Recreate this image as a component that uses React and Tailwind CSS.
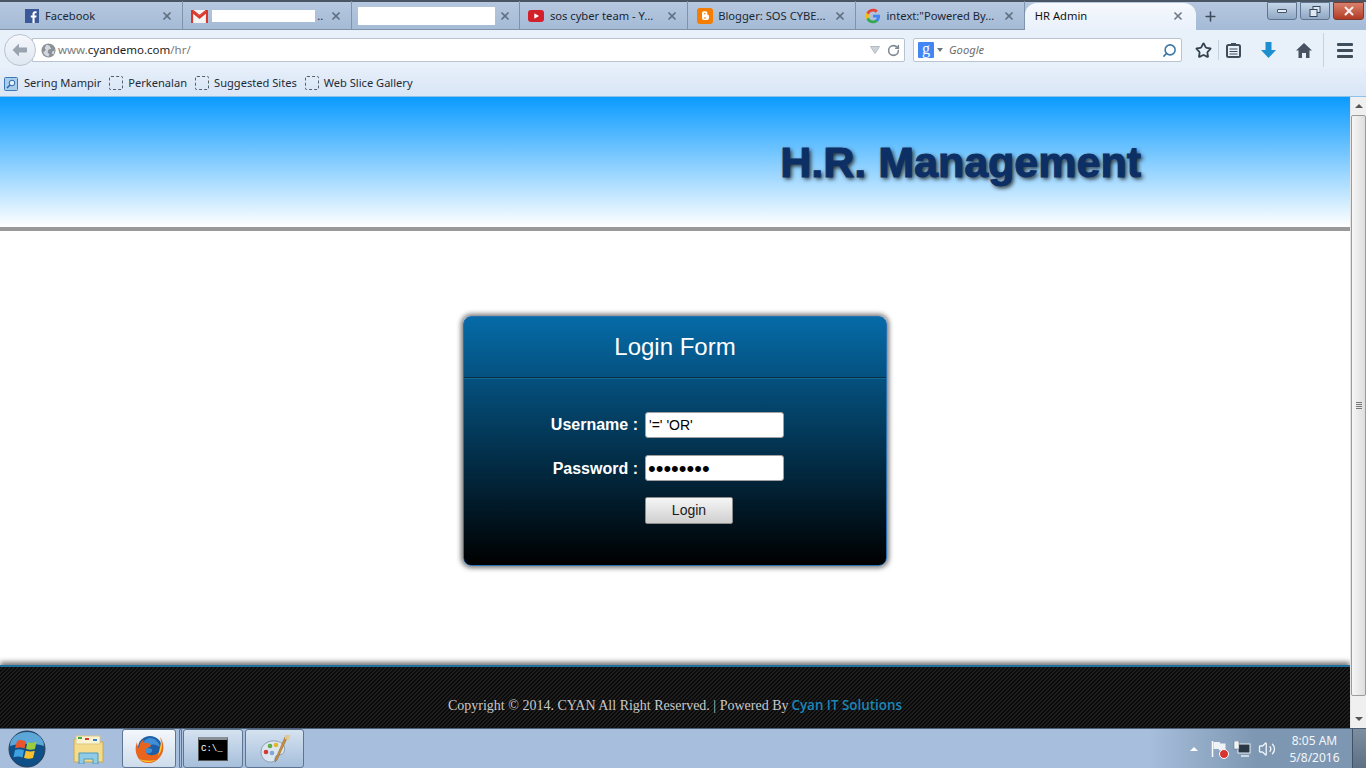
import { Star, Search, RotateCw, Plus, X, Volume2 } from 'lucide-react';

const tabs = [
  { title: 'Facebook', icon: 'fb' },
  { title: null, icon: 'gmail', blob: 'w-[103px] h-[12px] ml-[4px]', tail: '..' },
  { title: null, icon: null, blob: 'w-[137px] h-[18px] -ml-[2px]' },
  { title: 'sos cyber team - Y...', icon: 'yt' },
  { title: 'Blogger: SOS CYBE...', icon: 'blogger' },
  { title: 'intext:"Powered By...', icon: 'google' },
];

const bookmarks = ['Perkenalan', 'Suggested Sites', 'Web Slice Gallery'];

const TabIcon = ({ type }) => {
  if (type === 'fb') {
    return (
      <svg width="14" height="14" viewBox="0 0 14 14">
        <rect width="14" height="14" fill="#3b5998" />
        <path d="M9.6 14V8.6h1.7l.3-2.1h-2V5.2c0-.6.2-1 1-1h1V2.3c-.2 0-.8-.1-1.500-.1-1.500 0-2.600.9-2.600 2.700v1.600H5.800v2.100h1.700V14z" fill="#fff" />
      </svg>
    );
  }
  if (type === 'gmail') {
    return (
      <svg width="17" height="13" viewBox="0 0 17 13">
        <rect width="17" height="13" fill="#f4f4f4" />
        <path d="M1 13V1.500L8.500 7.500 16 1.500V13" fill="none" stroke="#d9372c" strokeWidth="2.200" />
        <path d="M0 .5h2l6.500 5 6.500-5h2" fill="none" stroke="#d9372c" strokeWidth="1.200" />
      </svg>
    );
  }
  if (type === 'yt') {
    return (
      <svg width="16" height="12" viewBox="0 0 16 12">
        <rect width="16" height="12" rx="3" fill="#d3202a" />
        <path d="M6.300 3.200v5.600L11 6z" fill="#fff" />
      </svg>
    );
  }
  if (type === 'blogger') {
    return (
      <svg width="16" height="16" viewBox="0 0 16 16">
        <rect width="16" height="16" rx="3" fill="#f57d00" />
        <path d="M5 8.500V5.200C5 4 5.800 3.300 7 3.300h1.500c1.100 0 1.900.8 1.900 1.800v1.100c0 .5.300.7.700.7.500 0 .9.300.9.900v2.200c0 1.200-.9 2-2 2H7c-1.200 0-2-.8-2-2z" fill="#fff" />
        <path d="M6.900 5.700h1.700M6.900 10h2.200" stroke="#f57d00" strokeWidth="1" />
      </svg>
    );
  }
  if (type === 'google') {
    return (
      <svg width="16" height="16" viewBox="0 0 24 24">
        <path d="M22.600 12.200c0-.8-.1-1.500-.2-2.200H12v4.200h5.900c-.3 1.400-1 2.500-2.200 3.300v2.700h3.600c2.100-1.900 3.300-4.700 3.300-8z" fill="#4285f4" />
        <path d="M12 23c3 0 5.500-1 7.300-2.700l-3.600-2.800c-1 .7-2.200 1.100-3.700 1.100-2.800 0-5.300-1.900-6.100-4.500H2.200v2.800C4 20.500 7.700 23 12 23z" fill="#34a853" />
        <path d="M5.900 14.100c-.5-1.400-.5-2.900 0-4.300V7H2.200c-1.500 3-1.500 6.900 0 9.900z" fill="#fbbc05" />
        <path d="M12 5.400c1.600 0 3 .6 4.100 1.600l3.200-3.200C17.500 2 15 1 12 1 7.700 1 4 3.500 2.200 7l3.700 2.800C6.700 7.300 9.200 5.400 12 5.400z" fill="#ea4335" />
      </svg>
    );
  }
  return null;
};

const Tab = ({ tab }) => (
  <div className="w-[168.300px] h-[28px] flex items-center pt-[2px] pl-[8px] pr-[9px] border-r border-[#7f93ab] shrink-0">
    {tab.icon && (
      <div className="w-[17px] flex justify-center shrink-0">
        <TabIcon type={tab.icon} />
      </div>
    )}
    {tab.title && <span className="ml-[5px] flex-1 whitespace-nowrap text-[#1d2733]">{tab.title}</span>}
    {tab.blob && (
      <div className="flex-1 flex items-center">
        <div className={`${tab.blob} bg-white shrink-0`} />
        {tab.tail && <span className="text-[#1d2733] ml-[2px]">{tab.tail}</span>}
      </div>
    )}
    <X size={12} strokeWidth={3.500} className="text-[#5f6f80] shrink-0 ml-[4px]" />
  </div>
);

const WindowButtons = () => (
  <div className="flex self-start h-[18px] ml-auto mr-[2px] gap-[3px]">
    <div className="w-[30px] rounded-b-[3px] border border-[#5f7590] bg-gradient-to-b from-[#c6d6e8] to-[#8fa8c4] flex items-center justify-center">
      <div className="w-[10px] h-[4px] bg-[#e6edf5] border border-[#44556a] rounded-[1px]" />
    </div>
    <div className="w-[30px] rounded-b-[3px] border border-[#5f7590] bg-gradient-to-b from-[#c6d6e8] to-[#8fa8c4] flex items-center justify-center">
      <svg width="12" height="11" viewBox="0 0 12 11">
        <rect x="4" y=".5" width="7" height="6" fill="#dfe8f2" stroke="#34465c" />
        <rect x="1" y="3.500" width="7" height="7" fill="#dfe8f2" stroke="#34465c" />
      </svg>
    </div>
    <div className="w-[31px] rounded-b-[3px] border border-[#7a3b30] bg-gradient-to-b from-[#d9806c] to-[#b23a22] flex items-center justify-center">
      <X size={14} strokeWidth={3.500} className="text-[#f5eeee]" />
    </div>
  </div>
);

const TabBar = () => (
  <div className="h-[30px] shrink-0 flex items-end border-t-2 border-[#4a5563] bg-gradient-to-b from-[#b5c8df] to-[#a4bad5] text-[11.200px] font-['Noto_Sans',sans-serif]">
    <div className="w-[15px] h-[28px] border-b border-[#7f93ab] shrink-0" />
    <div className="flex border-b border-[#7f93ab]">
      {tabs.map((tab, i) => (
        <Tab key={i} tab={tab} />
      ))}
    </div>
    <div className="w-[171px] h-[28px] -mb-px flex items-center pl-[10px] pr-[12px] pb-[2px] rounded-t-[12px] bg-gradient-to-b from-[#f6f9fd] to-[#e8f0fa] shrink-0 text-[#111]">
      <span className="flex-1">HR Admin</span>
      <X size={12} strokeWidth={3.500} className="text-[#6f7d8c]" />
    </div>
    <div className="h-[28px] flex items-center pl-[7px] shrink-0">
      <Plus size={15} strokeWidth={2.500} className="text-[#3f4d5e]" />
    </div>
    <WindowButtons />
  </div>
);

const NavBar = () => (
  <div className="h-[38px] shrink-0 flex items-center bg-[#e8f0fa] pt-[2px] pl-[4px] text-[11.200px] font-['Noto_Sans',sans-serif]">
    <div className="w-[32px] h-[32px] rounded-full border border-[#b9c4d1] bg-gradient-to-b from-[#f5f8fc] to-[#dfe7f1] flex items-center justify-center shrink-0 z-10">
      <svg width="18" height="16" viewBox="0 0 18 16">
        <path d="M8 1.500 1.500 8 8 14.500V10.500h8v-5H8z" fill="#99a4b0" />
      </svg>
    </div>
    <div className="-ml-[4px] w-[873px] h-[24px] bg-white border border-[#b8c4d2] rounded-r-[2px] flex items-center pl-[6px] pr-[4px] shrink-0">
      <svg width="15" height="15" viewBox="0 0 16 16" className="shrink-0 ml-[2px]">
        <circle cx="8" cy="8" r="7.500" fill="#8a9199" />
        <path d="M6 1.500 9 3l2 3-3 1-1 3 2 2-1 2.500C5 14 3 12 2.500 9.500L5 8 4 5zM12 9l2.500-1-1 4-2-.5z" fill="#d5d9de" />
      </svg>
      <span className="ml-[2px] flex-1 text-[11.500px] text-[#7a7a7a]">
        www.<span className="text-[#1d1d1d]">cyandemo.com</span>/hr/
      </span>
      <svg width="10" height="8" viewBox="0 0 10 8" className="mr-[7px]">
        <path d="M.5.500h9L5 7.500z" fill="#cdd3d9" stroke="#b3bac2" />
      </svg>
      <RotateCw size={13} strokeWidth={2.800} className="text-[#7e8891]" />
    </div>
    <div className="ml-[8px] w-[269px] h-[24px] bg-white border border-[#b8c4d2] rounded-[2px] flex items-center pl-[4px] pr-[4px] shrink-0">
      <div className="w-[16px] h-[16px] bg-[#4285f4] rounded-[1px] flex items-center justify-center pb-[3px] text-white text-[16px] leading-none font-['Liberation_Serif',serif]">
        g
      </div>
      <svg width="6" height="4" viewBox="0 0 6 4" className="ml-[3px]">
        <path d="M0 0h6L3 4z" fill="#6c7682" />
      </svg>
      <span className="ml-[6px] flex-1 italic text-[#6f6f6f]">Google</span>
      <Search size={15} strokeWidth={2.500} className="text-[#3b78a8] -scale-x-100" />
    </div>
    <div className="flex items-center pl-[13px]">
      <Star size={17} strokeWidth={2.500} className="text-[#33404e]" />
      <div className="w-px h-[20px] bg-[#c6d2e0] ml-[6px]" />
      <svg width="15" height="16" viewBox="0 0 15 16" className="ml-[7px]">
        <rect x="1" y="3" width="13" height="12" rx="1.500" fill="none" stroke="#3f4c5a" strokeWidth="2" />
        <rect x="5" y="1" width="5" height="3" fill="#3f4c5a" />
        <path d="M3.500 7h8M3.500 9.500h8M3.500 12h8" stroke="#3f4c5a" />
      </svg>
      <svg width="15" height="16" viewBox="0 0 15 16" className="ml-[20px]">
        <path d="M4.500 0h6v8h4.500l-7.500 8L0 8h4.500z" fill="#1c8fcf" />
      </svg>
      <svg width="16" height="15" viewBox="0 0 16 15" className="ml-[20px]">
        <path d="M8 0 0 7.500h2.500V15h3.500v-5h4v5h3.500V7.500H16z" fill="#46525f" />
      </svg>
      <div className="w-px h-[34px] bg-[#c6d2e0] ml-[11px]" />
      <div className="flex flex-col gap-[3px] ml-[13px]">
        <div className="w-[16px] h-[3px] bg-[#3f4c5a] rounded-[1px]" />
        <div className="w-[16px] h-[3px] bg-[#3f4c5a] rounded-[1px]" />
        <div className="w-[16px] h-[3px] bg-[#3f4c5a] rounded-[1px]" />
      </div>
    </div>
  </div>
);

const BookmarkBar = () => (
  <div className="h-[29px] shrink-0 flex items-center pt-[3px] pl-[4px] bg-gradient-to-b from-[#e6eefa] to-[#d9e6f6] border-b border-[#8fc0ea] text-[11.100px] text-[#1e2a36] font-['Noto_Sans',sans-serif]">
    <svg width="14" height="14" viewBox="0 0 14 14">
      <rect x=".5" y=".5" width="13" height="13" rx="1" fill="#a9cdec" stroke="#3f79b5" />
      <circle cx="8" cy="6" r="2.800" fill="#e4f1fb" stroke="#2d6aa8" />
      <path d="M6 8 3 11" stroke="#2d6aa8" strokeWidth="1.600" />
    </svg>
    <span className="ml-[6px]">Sering Mampir</span>
    {bookmarks.map((name) => (
      <div key={name} className="flex items-center ml-[8px]">
        <div className="w-[14px] h-[14px] border border-dashed border-[#56606c] rounded-[2px]" />
        <span className="ml-[5px]">{name}</span>
      </div>
    ))}
  </div>
);

const LoginCard = () => (
  <form className="w-[424px] h-[250px] mx-auto rounded-[8px] border border-[#2a6fb0] bg-[linear-gradient(to_bottom,#066ba8,#000)] shadow-[0_0_5px_2px_#777] font-['Liberation_Sans',sans-serif]">
    <div className="h-[61px] flex items-center justify-center border-b border-[#0c2d44] shadow-[0_1px_0_#0f6a90] text-[24px] text-white">
      Login Form
    </div>
    <div className="pt-[34px] flex flex-col">
      <div className="flex items-center h-[26px]">
        <label className="w-[174px] text-right text-[16px] font-bold text-white">Username :</label>
        <input
          readOnly
          type="text"
          value="'=' 'OR'"
          className="ml-[7px] w-[139px] h-[26px] px-[3px] bg-white rounded-[3px] border border-[#a0a0a0] text-[14px] text-black"
        />
      </div>
      <div className="flex items-center h-[26px] mt-[17px]">
        <label className="w-[174px] pt-px text-right text-[16px] font-bold text-white">Password :</label>
        <input
          readOnly
          type="password"
          value="12345678"
          className="ml-[7px] w-[139px] h-[26px] px-[2px] bg-white rounded-[3px] border border-[#a0a0a0] text-[22px] text-black"
        />
      </div>
      <button
        type="button"
        className="ml-[181px] mt-[16px] w-[88px] h-[27px] rounded-[2px] border border-[#8c8c8c] bg-gradient-to-b from-[#f6f6f6] to-[#cfcfcf] text-[14px] text-[#1a1a1a]"
      >
        Login
      </button>
    </div>
  </form>
);

const Footer = () => (
  <div className="h-[63px] shrink-0 flex items-center justify-center pt-[15px] border-t-2 border-[#1f6f9f] bg-[repeating-linear-gradient(135deg,#0a0a0a_0px,#0a0a0a_1.414px,#1e1e1e_1.414px,#1e1e1e_2.828px)] shadow-[0_-3px_5px_#777] text-[14px] text-[#c9c9c9] font-['Liberation_Serif',serif]">
    <span>Copyright © 2014. CYAN All Right Reserved. | Powered By </span>
    <span className="ml-[3px] text-[#1b86b8] font-semibold font-['Open_Sans',sans-serif] text-[13.400px]">Cyan IT Solutions</span>
  </div>
);

const Scrollbar = () => (
  <div className="w-[16px] shrink-0 flex flex-col items-center bg-[#f0f0f0] border-l border-[#e4e4e4]">
    <div className="h-[18px] flex items-center justify-center">
      <div className="border-x-[4px] border-x-transparent border-b-[4px] border-b-[#555]" />
    </div>
    <div className="w-[15px] h-[581px] rounded-[2px] border border-[#9b9b9b] bg-gradient-to-r from-[#f6f6f6] to-[#dedede] flex flex-col items-center justify-center gap-px">
      <div className="w-[6px] h-px bg-[#777]" />
      <div className="w-[6px] h-px bg-[#777]" />
      <div className="w-[6px] h-px bg-[#777]" />
      <div className="w-[6px] h-px bg-[#777]" />
    </div>
    <div className="flex-1" />
    <div className="h-[18px] flex items-center justify-center">
      <div className="border-x-[4px] border-x-transparent border-t-[4px] border-t-[#555]" />
    </div>
  </div>
);

const TaskButton = ({ children, className }) => (
  <div className={`${className} h-[39px] rounded-[3px] border border-[#5d7590] flex items-center justify-center shrink-0`}>
    {children}
  </div>
);

const Taskbar = () => (
  <div className="h-[40px] shrink-0 flex items-end border-t border-[#4c5f74] bg-[linear-gradient(to_right,#a7bfdc_0%,#a7bfdc_84%,#7d96b1_92%,#7d96b1_100%)] font-['Noto_Sans',sans-serif]">
    <div className="w-[122px] h-[39px] flex items-center shrink-0">
      <svg width="38" height="38" viewBox="0 0 38 38" className="ml-[8px] shrink-0">
        <circle cx="19" cy="19" r="18" fill="#0f4f87" stroke="#2a3e52" />
        <path d="M2 16a17 14 0 0 1 34 0c-8-3-25-3-34 0z" fill="#5ca6d8" />
        <path d="M9 11c3-1.500 6-1 9 .5l-1.500 7c-3-1.200-6-1.500-9.500-.2z" fill="#e8552c" />
        <path d="M19.500 12c3 1.500 6 1 9-.5l-1.500 7.500c-3 1-6 1-9-.2z" fill="#9ccb3b" />
        <path d="M7 20c3-1 6-.8 9 .3L14.500 27.500c-3-1.200-6-1.300-9-.2z" fill="#3ea2e0" />
        <path d="M17.800 20.800c3 1 6 1 9 0L25 28c-3 1-6 1-9-.2z" fill="#f6c12c" />
      </svg>
      <svg width="32" height="30" viewBox="0 0 32 30" className="ml-[27px] shrink-0">
        <path d="M1 5h11l3 3h15v20H1z" fill="#f4dc8c" stroke="#c8a858" />
        <rect x="3" y="2" width="24" height="8" fill="#fbf4d2" stroke="#d9c88a" />
        <rect x="5" y="3" width="4" height="2" fill="#3fae3f" />
        <rect x="12" y="4" width="4" height="2" fill="#d0392c" />
        <rect x="20" y="5" width="4" height="2" fill="#3a7cc8" />
        <path d="M6 19h19v11h-5v-5h-9v5H6z" fill="#8ecbe6" stroke="#4d9ac0" />
      </svg>
    </div>
    <TaskButton className="w-[54px] bg-gradient-to-b from-[#f4f7fb] to-[#cddcec]">
      <svg width="32" height="32" viewBox="0 0 32 32">
        <circle cx="17" cy="15" r="12" fill="#1f5fa8" />
        <path d="M17 5c5 0 9 4 10 9-3-2-6-3-9-2-3 0-4 2-3 3l4 1c1 3-2 5-5 4-3 0-5-2-6-5 0-4 3-9 9-10z" fill="#3f8fd8" />
        <path d="M27 4c4 5 5 14 0 20-4 6-13 8-19 4C3 24 1 16 4 9c0 3 1 5 2 6 0-4 2-7 5-9-1 2-1 3 0 4 3-1 6 0 7 3-2 2-6 2-6 4 0 3 4 6 8 5 4 0 7-3 8-7 1-4 0-8-1-11z" fill="#e9651d" />
        <path d="M28 7c2 5 1 11-3 16 1-5 3-11 3-16zM6 26c5 4 12 4 17 1-5 1-12 1-17-1z" fill="#f9c531" />
      </svg>
    </TaskButton>
    <div className="w-[3px] h-[39px] ml-[3px] mr-[1px] rounded-[1px] border border-[#5d7590] shrink-0" />
    <TaskButton className="w-[60px] bg-gradient-to-b from-[#d5e2f0] to-[#a6bfdb]">
      <div className="w-[30px] h-[24px] bg-black border border-[#555] border-t-[3px] border-t-[#8a8f96] flex items-center pl-[2px] text-[9px] leading-none text-white font-['Liberation_Mono',monospace]">
        C:\_
      </div>
    </TaskButton>
    <TaskButton className="w-[59px] ml-[2px] bg-gradient-to-b from-[#d5e2f0] to-[#a6bfdb]">
      <svg width="32" height="30" viewBox="0 0 32 30">
        <path d="M2 18C2 10 10 6 17 7c7 1 10 6 8 11-2 4-6 2-8 4-2 3 0 5-4 6-6 1-11-4-11-10z" fill="#dbe6ef" stroke="#8aa0b4" />
        <circle cx="7" cy="18" r="2.300" fill="#cf3b33" />
        <circle cx="11" cy="12" r="2.300" fill="#5ead46" />
        <circle cx="17" cy="11" r="2.300" fill="#e5b52a" />
        <circle cx="13" cy="19" r="2.300" fill="#7fa8d8" />
        <path d="M29 2 18 26l-2 2 .5-3L26 3z" fill="#cf8f3a" stroke="#8a5f23" strokeWidth=".5" />
        <path d="M26 1h5l-1 5-4-1z" fill="#e5c88f" />
      </svg>
    </TaskButton>
    <div className="flex-1" />
    <div className="h-[39px] flex items-center shrink-0">
      <div className="border-x-[4px] border-x-transparent border-b-[4px] border-b-white" />
      <div className="relative ml-[13px] w-[16px] h-[17px]">
        <svg width="16" height="17" viewBox="0 0 16 17">
          <path d="M1.500 1v16" stroke="#fff" strokeWidth="1.500" />
          <path d="M2.500 2h6l1 1.500h5v7h-6l-1-1.500h-5z" fill="#f0f3f6" />
        </svg>
        <div className="absolute -right-[2px] -bottom-[2px] w-[10px] h-[10px] rounded-full bg-[#d8342f] border border-white" />
      </div>
      <svg width="18" height="16" viewBox="0 0 18 16" className="ml-[6px]">
        <rect x="5" y="3" width="12" height="9" fill="#2a3846" stroke="#e6edf4" />
        <path d="M8 15h8" stroke="#e6edf4" strokeWidth="1.500" />
        <rect x="1" y="0" width="5" height="8" fill="#f0f3f6" stroke="#56687a" strokeWidth=".5" />
      </svg>
      <Volume2 size={18} strokeWidth={1.800} className="ml-[7px] text-[#eef3f8]" />
    </div>
    <div className="w-[75px] h-[39px] flex flex-col items-center justify-center ml-px text-[12px] leading-[17px] text-[#f2f6fa] shrink-0">
      <span>8:05 AM</span>
      <span>5/8/2016</span>
    </div>
    <div className="w-[14px] h-[39px] border-l border-[#3f5268] bg-gradient-to-b from-[#7d8e9f] to-[#5e7084] shrink-0" />
  </div>
);

export default function App() {
  return (
    <div className="w-[1366px] h-[768px] overflow-hidden flex flex-col bg-white">
      <TabBar />
      <NavBar />
      <BookmarkBar />
      <div className="flex-1 flex min-h-0">
        <div className="flex-1 flex flex-col min-w-0">
          <div className="h-[134px] shrink-0 flex items-center justify-end pr-[209px] border-b-4 border-[#999] bg-[linear-gradient(to_bottom,#0a9bff,#fff)]">
            <h1 className="text-[43px] font-bold text-[#0c2f66] [-webkit-text-stroke:1px_#0c2f66] [text-shadow:2px_2px_4px_#222] font-['Liberation_Sans',sans-serif]">
              H.R. Management
            </h1>
          </div>
          <div className="flex-1 pt-[85px]">
            <LoginCard />
          </div>
          <Footer />
        </div>
        <Scrollbar />
      </div>
      <Taskbar />
    </div>
  );
}
